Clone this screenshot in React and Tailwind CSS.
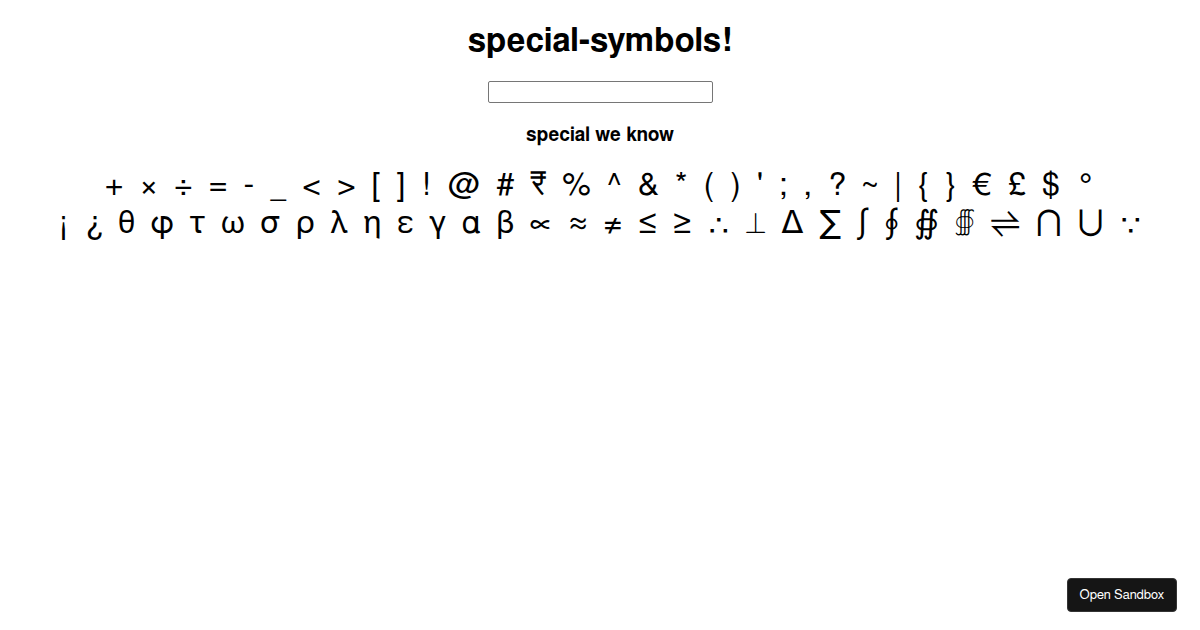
const rowOne = [..."+×÷=-_<>[]!@#₹%^&*()';,?~|{}€£$°"];
const rowTwo = [..."¡¿θφτωσρληεγαβ∝≈≠≤≥∴⟂Δ∑∫∮∯∰⇌⋂⋃∵"];

const symbolFonts = {
  "⟂": "font-[FreeMono,monospace]",
  "∑": "font-['DejaVu_Sans',sans-serif]",
  "∯": "font-['DejaVu_Serif',serif]",
  "∰": "font-[FreeMono,monospace]",
  "⇌": "text-[37px]",
};

function Symbols({ items }) {
  return items.map((s) => (
    <span key={s} className={`p-2 leading-[0px] ${symbolFonts[s] ?? ""}`}>
      {s}
    </span>
  ));
}

export default function App() {
  return (
    <div className="min-h-screen bg-white text-center font-[FreeSans,'Liberation_Sans',sans-serif] text-black">
      <main className="px-2 pt-[22px]">
        <h1 className="text-[33px] leading-10 font-bold">special-symbols!</h1>
        <input
          aria-label="Symbol"
          className="mx-auto mt-[19px] block h-[22px] w-[225px] rounded-[2px] border border-[#767676] px-1"
        />
        <h2 className="mt-[21px] text-[19px] leading-6 font-bold">special we know</h2>
        <div className="mt-[18px] text-[32px] leading-[38px]">
          <div><Symbols items={rowOne} /></div>
          <div><Symbols items={rowTwo} /></div>
        </div>
      </main>
      <button className="fixed right-[23px] bottom-[18px] h-[34px] rounded-sm border border-[#343434] bg-[#151515] px-3 pt-[2px] text-[13px] text-white">
        Open Sandbox
      </button>
    </div>
  );
}
